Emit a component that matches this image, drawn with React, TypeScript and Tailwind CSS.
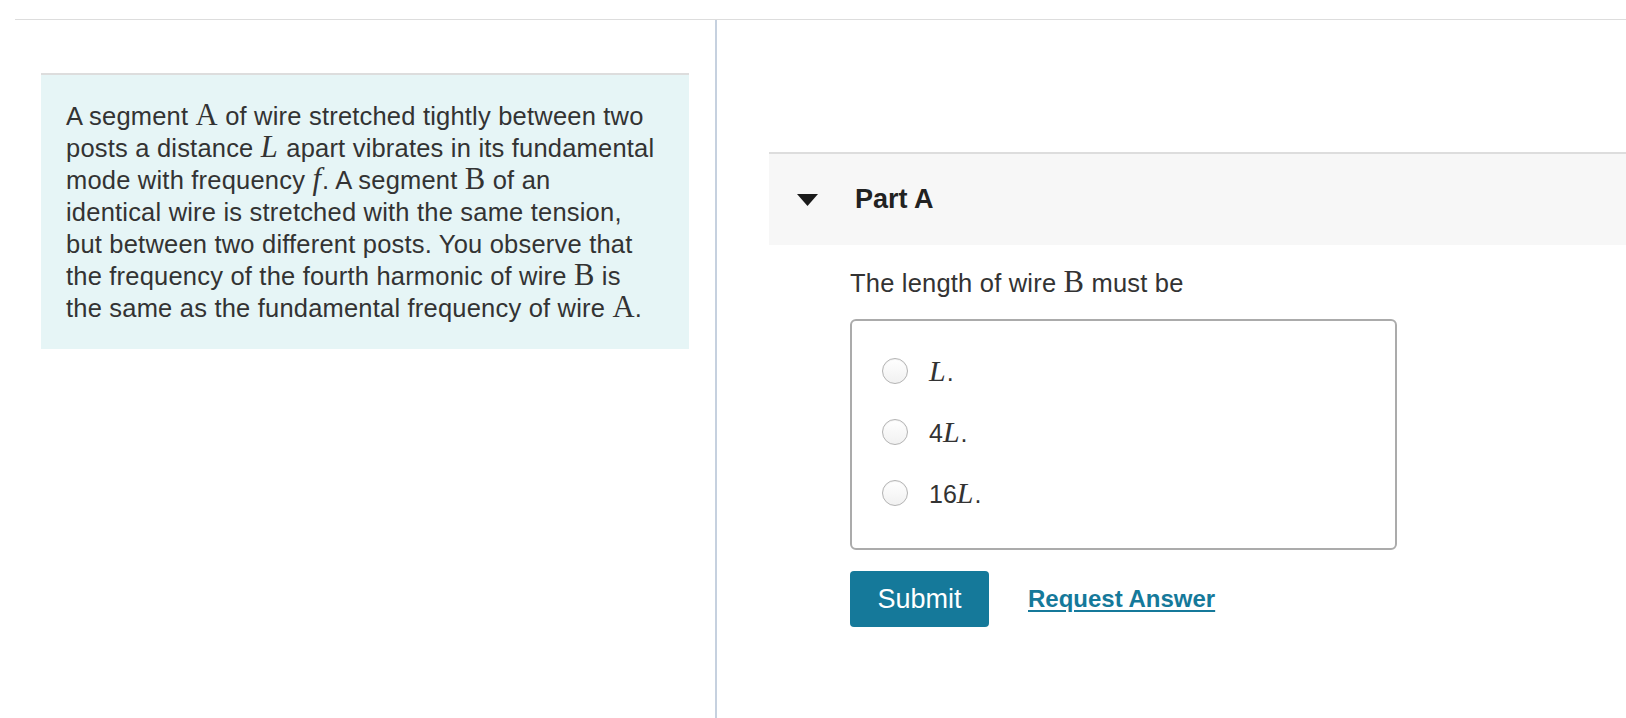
const sans = "font-['Liberation_Sans',Arial,Helvetica,sans-serif]";

const Up = ({ children }: { children: React.ReactNode }) => (
  <span className="font-['Liberation_Serif','Times_New_Roman',serif] text-[1.2em] leading-none">{children}</span>
);

const It = ({ children }: { children: React.ReactNode }) => (
  <span className="font-['Liberation_Serif','Times_New_Roman',serif] italic text-[1.2em] leading-none pr-[1px]">{children}</span>
);

const Radio = () => (
  <span className="w-[26px] h-[26px] rounded-full border border-[#b3b3b3] bg-gradient-to-b from-white to-[#f1f1f1] shadow-[inset_0_1px_1px_rgba(0,0,0,0.05)] shrink-0" />
);

const options = [
  { pre: "", key: "a" },
  { pre: "4", key: "b" },
  { pre: "16", key: "c" },
];

export default function App() {
  return (
    <div className={`${sans} min-h-[718px] bg-white text-[#333]`}>
      <div className="pt-[19px] pl-[15px]">
        <div className="flex border-t border-[#dddddd] min-h-[699px]">
          {/* left column */}
          <div className="w-[700px] shrink-0 pt-[53px] pl-[26px] pr-[26px]">
            <div className="border-t-2 border-[#dddddd] bg-[#e6f5f6] pt-[25px] pb-[25px] pl-[25px] text-[25.5px] leading-[32px] tracking-[0.2px]">
              <p>
                A segment <Up>A</Up> of wire stretched tightly between two
                <br />
                posts a distance <It>L</It> apart vibrates in its fundamental
                <br />
                mode with frequency <It>f</It>. A segment <Up>B</Up> of an
                <br />
                identical wire is stretched with the same tension,
                <br />
                but between two different posts. You observe that
                <br />
                the frequency of the fourth harmonic of wire <Up>B</Up> is
                <br />
                the same as the fundamental frequency of wire <Up>A</Up>.
              </p>
            </div>
          </div>

          {/* right column */}
          <div className="flex-1 border-l-2 border-[#c6d1df] pt-[132px] pl-[52px]">
            <div className="border-t-2 border-[#dddddd] bg-[#f7f7f7] h-[93px] flex items-center pl-[28px]">
              <svg width="21" height="12" viewBox="0 0 21 12" className="shrink-0">
                <path d="M0 0 H21 L10.5 12 Z" fill="#1a1a1a" />
              </svg>
              <span className="ml-[37px] text-[27px] font-bold text-[#222]">Part A</span>
            </div>

            <div className="pl-[81px] pt-[22px]">
              <p className="text-[25.5px] leading-[32px] tracking-[0.2px]">
                The length of wire <Up>B</Up> must be
              </p>

              <div className="mt-[20px] w-[547px] h-[231px] border-2 border-[#ababab] rounded-[6px] pl-[30px] pt-[37px] flex flex-col gap-[35px]">
                {options.map((o) => (
                  <label key={o.key} className="flex items-center gap-[21px] h-[26px]">
                    <Radio />
                    <span className="text-[25px] leading-none">
                      {o.pre}
                      <It>L</It>.
                    </span>
                  </label>
                ))}
              </div>

              <div className="mt-[21px] flex items-center">
                <button className="w-[139px] h-[56px] rounded-[4px] bg-[#15799a] text-white text-[27px]">
                  Submit
                </button>
                <a className="ml-[39px] text-[24px] font-bold text-[#15799a] underline underline-offset-[3px] decoration-2">
                  Request Answer
                </a>
              </div>
            </div>
          </div>
        </div>
      </div>
    </div>
  );
}
